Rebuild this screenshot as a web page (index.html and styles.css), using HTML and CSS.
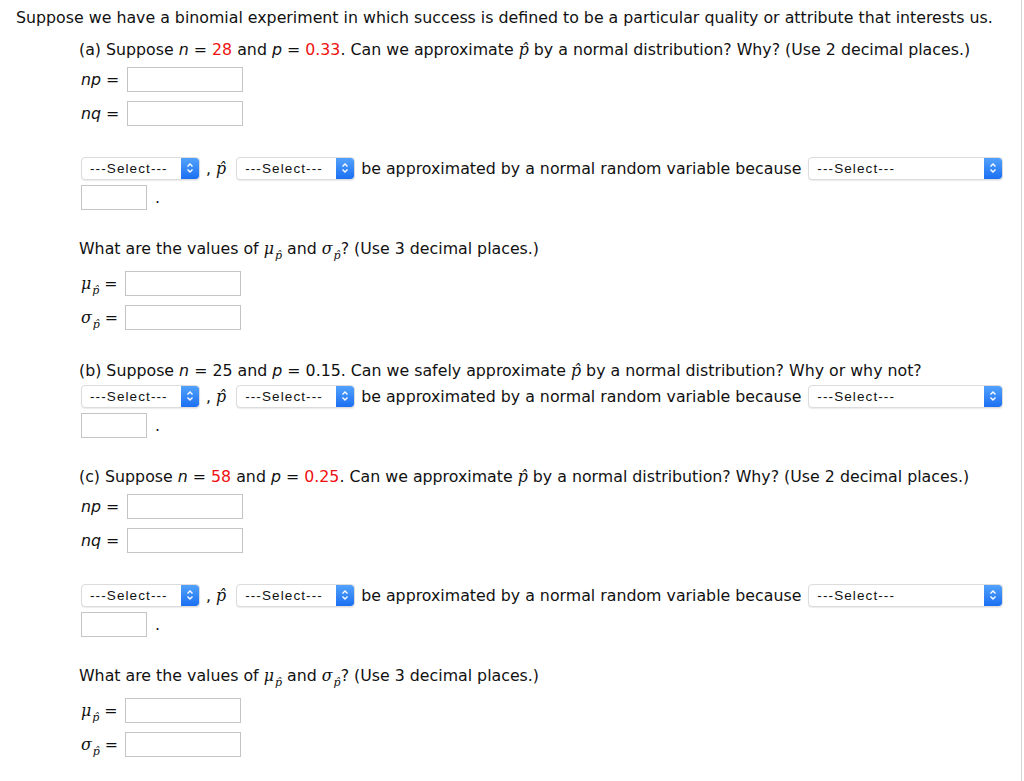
FILE: index.html
```html
<!DOCTYPE html>
<html>
<head>
<meta charset="utf-8">
<link rel="stylesheet" href="styles.css">
</head>
<body>
<div class="page">
  <p class="intro">Suppose we have a binomial experiment in which success is defined to be a particular quality or attribute that interests us.</p>

  <div class="part">
    <p class="q">(a) Suppose <i>n</i> = <span class="red">28</span> and <i>p</i> = <span class="red">0.33</span>. Can we approximate <span class="phat">p̂</span> by a normal distribution? Why? (Use 2 decimal places.)</p>
    <div class="eq first"><span class="lbl"><i>np</i> =</span><span class="box"></span></div>
    <div class="eq"><span class="lbl"><i>nq</i> =</span><span class="box"></span></div>
    <div class="selrow gap30">
      <span class="sel w1"><span class="txt">---Select---</span><span class="arr"><svg width="8" height="12" viewBox="0 0 8 12"><path d="M1.5 4.5 L4 2 L6.5 4.5 M1.5 7.5 L4 10 L6.5 7.5" fill="none" stroke="#fff" stroke-width="1.4"/></svg></span></span>
      <span class="comma">, <span class="phat">p̂</span></span>
      <span class="sel w1"><span class="txt">---Select---</span><span class="arr"><svg width="8" height="12" viewBox="0 0 8 12"><path d="M1.5 4.5 L4 2 L6.5 4.5 M1.5 7.5 L4 10 L6.5 7.5" fill="none" stroke="#fff" stroke-width="1.4"/></svg></span></span>
      <span class="mid">be approximated by a normal random variable because</span>
      <span class="sel w2"><span class="txt">---Select---</span><span class="arr"><svg width="8" height="12" viewBox="0 0 8 12"><path d="M1.5 4.5 L4 2 L6.5 4.5 M1.5 7.5 L4 10 L6.5 7.5" fill="none" stroke="#fff" stroke-width="1.4"/></svg></span></span>
    </div>
    <div class="dotrow"><span class="box small"></span><span class="dot">.</span></div>
    <p class="q2">What are the values of <span class="gk">μ</span><sub class="sb"><span class="phat">p̂</span></sub> and <span class="gk">σ</span><sub class="sb"><span class="phat">p̂</span></sub>? (Use 3 decimal places.)</p>
    <div class="eq first2"><span class="lbl2"><span class="gk">μ</span><sub class="sb"><span class="phat">p̂</span></sub> =</span><span class="box"></span></div>
    <div class="eq"><span class="lbl2"><span class="gk">σ</span><sub class="sb"><span class="phat">p̂</span></sub> =</span><span class="box"></span></div>
  </div>

  <div class="part partb">
    <p class="q">(b) Suppose <i>n</i> = 25 and <i>p</i> = 0.15. Can we safely approximate <span class="phat">p̂</span> by a normal distribution? Why or why not?</p>
    <div class="selrow gap3">
      <span class="sel w1"><span class="txt">---Select---</span><span class="arr"><svg width="8" height="12" viewBox="0 0 8 12"><path d="M1.5 4.5 L4 2 L6.5 4.5 M1.5 7.5 L4 10 L6.5 7.5" fill="none" stroke="#fff" stroke-width="1.4"/></svg></span></span>
      <span class="comma">, <span class="phat">p̂</span></span>
      <span class="sel w1"><span class="txt">---Select---</span><span class="arr"><svg width="8" height="12" viewBox="0 0 8 12"><path d="M1.5 4.5 L4 2 L6.5 4.5 M1.5 7.5 L4 10 L6.5 7.5" fill="none" stroke="#fff" stroke-width="1.4"/></svg></span></span>
      <span class="mid">be approximated by a normal random variable because</span>
      <span class="sel w2"><span class="txt">---Select---</span><span class="arr"><svg width="8" height="12" viewBox="0 0 8 12"><path d="M1.5 4.5 L4 2 L6.5 4.5 M1.5 7.5 L4 10 L6.5 7.5" fill="none" stroke="#fff" stroke-width="1.4"/></svg></span></span>
    </div>
    <div class="dotrow"><span class="box small"></span><span class="dot">.</span></div>
  </div>

  <div class="part partc">
    <p class="q">(c) Suppose <i>n</i> = <span class="red">58</span> and <i>p</i> = <span class="red">0.25</span>. Can we approximate <span class="phat">p̂</span> by a normal distribution? Why? (Use 2 decimal places.)</p>
    <div class="eq first"><span class="lbl"><i>np</i> =</span><span class="box"></span></div>
    <div class="eq"><span class="lbl"><i>nq</i> =</span><span class="box"></span></div>
    <div class="selrow gap30">
      <span class="sel w1"><span class="txt">---Select---</span><span class="arr"><svg width="8" height="12" viewBox="0 0 8 12"><path d="M1.5 4.5 L4 2 L6.5 4.5 M1.5 7.5 L4 10 L6.5 7.5" fill="none" stroke="#fff" stroke-width="1.4"/></svg></span></span>
      <span class="comma">, <span class="phat">p̂</span></span>
      <span class="sel w1"><span class="txt">---Select---</span><span class="arr"><svg width="8" height="12" viewBox="0 0 8 12"><path d="M1.5 4.5 L4 2 L6.5 4.5 M1.5 7.5 L4 10 L6.5 7.5" fill="none" stroke="#fff" stroke-width="1.4"/></svg></span></span>
      <span class="mid">be approximated by a normal random variable because</span>
      <span class="sel w2"><span class="txt">---Select---</span><span class="arr"><svg width="8" height="12" viewBox="0 0 8 12"><path d="M1.5 4.5 L4 2 L6.5 4.5 M1.5 7.5 L4 10 L6.5 7.5" fill="none" stroke="#fff" stroke-width="1.4"/></svg></span></span>
    </div>
    <div class="dotrow"><span class="box small"></span><span class="dot">.</span></div>
    <p class="q2">What are the values of <span class="gk">μ</span><sub class="sb"><span class="phat">p̂</span></sub> and <span class="gk">σ</span><sub class="sb"><span class="phat">p̂</span></sub>? (Use 3 decimal places.)</p>
    <div class="eq first2"><span class="lbl2"><span class="gk">μ</span><sub class="sb"><span class="phat">p̂</span></sub> =</span><span class="box"></span></div>
    <div class="eq"><span class="lbl2"><span class="gk">σ</span><sub class="sb"><span class="phat">p̂</span></sub> =</span><span class="box"></span></div>
  </div>
</div>
</body>
</html>
```

FILE: styles.css
```css
html, body {
  margin: 0;
  padding: 0;
  background: #fff;
}
.page {
  width: 1021px;
  min-height: 781px;
  border-right: 1px solid #d4d4d4;
  box-sizing: content-box;
  font-family: "DejaVu Sans", Verdana, sans-serif;
  font-size: 15.8px;
  color: #111;
  padding-top: 8px;
}
p { margin: 0; }
.intro {
  line-height: 20px;
  padding-left: 16px;
  white-space: nowrap;
}
.part {
  padding-left: 79px;
}
.q {
  line-height: 20px;
  margin-top: 12px;
  white-space: nowrap;
}
.partb .q { margin-top: 31px; }
.partc .q { margin-top: 29px; }
.red { color: #ee1111; }
i { font-style: italic; }
.phat {
  font-family: "DejaVu Serif", "Liberation Serif", serif;
  font-style: italic;
}
.gk {
  font-family: "DejaVu Serif", serif;
  font-style: italic;
}
.sb {
  font-size: 11px;
  vertical-align: -5px;
  line-height: 0;
  margin-left: 1px;
}
.eq {
  display: flex;
  align-items: center;
  height: 25px;
  margin-top: 9px;
  padding-left: 2px;
}
.eq.first { margin-top: 7px; }
.eq.first2 { margin-top: 12px; }
.lbl {
  width: 46px;
}
.lbl2 {
  width: 44px;
}
.box {
  display: inline-block;
  width: 114px;
  height: 23px;
  border: 1px solid #c4c4c4;
  background: #fff;
}
.box.small {
  width: 64px;
}
.selrow {
  display: flex;
  align-items: center;
  height: 24px;
  padding-left: 2px;
  white-space: nowrap;
}
.gap30 { margin-top: 30px; }
.gap3 { margin-top: 3px; }
.sel {
  display: inline-flex;
  align-items: stretch;
  height: 21px;
  border: 1px solid #dcdcdc;
  border-radius: 4px;
  background: #fff;
  box-shadow: 0 1px 1px rgba(0,0,0,0.08);
  font-family: "Liberation Sans", Arial, sans-serif;
  font-size: 13.5px;
  letter-spacing: 1.1px;
  color: #111;
  overflow: hidden;
}
.sel .txt {
  flex: 1;
  padding-left: 8px;
  line-height: 21px;
}
.sel .arr {
  width: 18px;
  background: linear-gradient(#52a2fc, #1b6ff2);
  display: flex;
  align-items: center;
  justify-content: center;
  border-radius: 0 3px 3px 0;
}
.sel.w1 { width: 117px; }
.sel.w2 { width: 193px; }
.comma {
  margin: 0 10px 0 6px;
}
.mid {
  margin-left: 6px;
  margin-right: 7px;
}
.dotrow {
  display: flex;
  align-items: center;
  height: 25px;
  margin-top: 5px;
  padding-left: 2px;
}
.dotrow .dot {
  margin-left: 8px;
}
.q2 {
  line-height: 20px;
  margin-top: 29px;
  white-space: nowrap;
}
```
